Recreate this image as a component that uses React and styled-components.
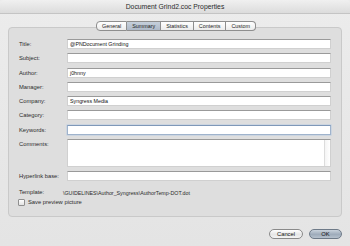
import React from 'react';
import styled, { createGlobalStyle } from 'styled-components';

const GlobalStyle = createGlobalStyle`
  html, body {
    margin: 0;
    padding: 0;
    background: #e6e6e6;
  }
  body {
    font-family: "Liberation Sans", Arial, sans-serif;
  }
`;

const fields = [
  { label: 'Title:', value: '@PNDocument Grinding' },
  { label: 'Subject:', value: '' },
  { label: 'Author:', value: 'j0hnny' },
  { label: 'Manager:', value: '' },
  { label: 'Company:', value: 'Syngress Media' },
  { label: 'Category:', value: '' },
  { label: 'Keywords:', value: '', focused: true },
];

const tabs = ['General', 'Summary', 'Statistics', 'Contents', 'Custom'];

const templatePath = '\\GUIDELINES\\Author_Syngress\\AuthorTemp-DOT.dot';

export default function App() {
  return (
    <Window>
      <GlobalStyle />
      <TitleBar>Document Grind2.coc Properties</TitleBar>
      <Body>
        <TabRow>
          {tabs.map(t => (
            <Tab key={t} selected={t === 'Summary'}>{t}</Tab>
          ))}
        </TabRow>
        <GroupBox>
          <FieldGrid>
            {fields.map(f => (
              <React.Fragment key={f.label}>
                <Label>{f.label}</Label>
                <Input focused={f.focused}>{f.value}</Input>
              </React.Fragment>
            ))}
            <Label top>Comments:</Label>
            <TextArea>
              <ScrollTrack />
            </TextArea>
            <Label>Hyperlink base:</Label>
            <Input />
            <Label>Template:</Label>
            <TemplateValue>{templatePath}</TemplateValue>
          </FieldGrid>
          <CheckRow>
            <CheckBox />
            <span>Save preview picture</span>
          </CheckRow>
        </GroupBox>
        <Footer>
          <Button>Cancel</Button>
          <Button primary>OK</Button>
        </Footer>
      </Body>
    </Window>
  );
}

const Window = styled.div`
  width: 350px;
  height: 246px;
  background: linear-gradient(#ececec, #e4e4e4);
  display: flex;
  flex-direction: column;
  overflow: hidden;
  color: #222;
`;

const TitleBar = styled.div`
  height: 14px;
  line-height: 13px;
  text-align: center;
  font-size: 6.8px;
  color: #2a2a2a;
  background: linear-gradient(#f0f0f0, #dcdcdc);
  border-bottom: 1px solid #c4c4c4;
  box-sizing: border-box;
  border-radius: 4px 4px 0 0;
`;

const Body = styled.div`
  flex: 1;
  display: flex;
  flex-direction: column;
  padding: 7px 8px 0 8px;
`;

const TabRow = styled.div`
  display: flex;
  justify-content: center;
  margin-left: 2px;
  margin-bottom: -4px;
  position: relative;
  z-index: 1;
`;

const Tab = styled.div`
  height: 8px;
  line-height: 8px;
  padding: 0 5px;
  font-size: 5.4px;
  color: #222;
  border: 1px solid #8e8e8e;
  border-left: none;
  background: ${p => p.selected
    ? 'linear-gradient(#c6d0dc, #aeb9c8)'
    : 'linear-gradient(#ffffff, #ececec)'};
  &:first-child {
    border-left: 1px solid #8e8e8e;
    border-radius: 4px 0 0 4px;
  }
  &:last-child {
    border-radius: 0 4px 4px 0;
  }
`;

const GroupBox = styled.div`
  height: 190px;
  box-sizing: border-box;
  background: #dedede;
  border: 1px solid #c9c9c9;
  border-radius: 4px;
  padding: 11px 10px 0 10px;
  display: flex;
  flex-direction: column;
`;

const FieldGrid = styled.div`
  display: grid;
  grid-template-columns: 48px 1fr;
  row-gap: 4.3px;
  align-items: center;
`;

const Label = styled.div`
  font-size: 5.8px;
  color: #2b2b2b;
  white-space: nowrap;
  align-self: ${p => (p.top ? 'start' : 'center')};
  padding-top: ${p => (p.top ? '2px' : '0')};
`;

const Input = styled.div`
  height: 10px;
  box-sizing: border-box;
  background: #fff;
  border: 1px solid ${p => (p.focused ? '#9fb3cc' : '#d0d0d0')};
  border-top-color: ${p => (p.focused ? '#7f98b8' : '#9a9a9a')};
  box-shadow: ${p => (p.focused ? '0 0 0 0.5px #b9cbe2' : 'none')};
  font-size: 5.3px;
  line-height: 8px;
  padding-left: 2px;
  color: #111;
  white-space: nowrap;
`;

const TextArea = styled.div`
  height: 28px;
  box-sizing: border-box;
  background: #fff;
  border: 1px solid #d0d0d0;
  border-top-color: #9a9a9a;
  display: flex;
  justify-content: flex-end;
`;

const ScrollTrack = styled.div`
  width: 5px;
  border-left: 1px solid #dcdcdc;
  background: linear-gradient(90deg, #f4f4f4, #ffffff);
`;

const TemplateValue = styled.div`
  font-size: 5.3px;
  color: #2b2b2b;
  margin-left: -4px;
  padding: 4px 0 3px 0;
  white-space: nowrap;
`;

const CheckRow = styled.div`
  display: flex;
  align-items: center;
  gap: 3px;
  font-size: 5.8px;
  color: #2b2b2b;
  margin-left: -1px;
`;

const CheckBox = styled.div`
  width: 7px;
  height: 7px;
  box-sizing: border-box;
  border: 1px solid #8f8f8f;
  border-radius: 1px;
  background: linear-gradient(#ffffff, #e2e2e2);
`;

const Footer = styled.div`
  display: flex;
  justify-content: flex-end;
  gap: 6px;
  padding-top: 12px;
`;

const Button = styled.div`
  width: ${p => (p.primary ? '33px' : '34px')};
  height: 10px;
  box-sizing: border-box;
  border-radius: 5px;
  border: 1px solid ${p => (p.primary ? '#6e7a88' : '#8a8a8a')};
  background: ${p => p.primary
    ? 'linear-gradient(#c9d2dc, #9eabba 55%, #b6c1cd)'
    : 'linear-gradient(#ffffff, #e6e6e6 55%, #f4f4f4)'};
  font-size: 5.8px;
  line-height: 8px;
  text-align: center;
  color: #111;
`;
